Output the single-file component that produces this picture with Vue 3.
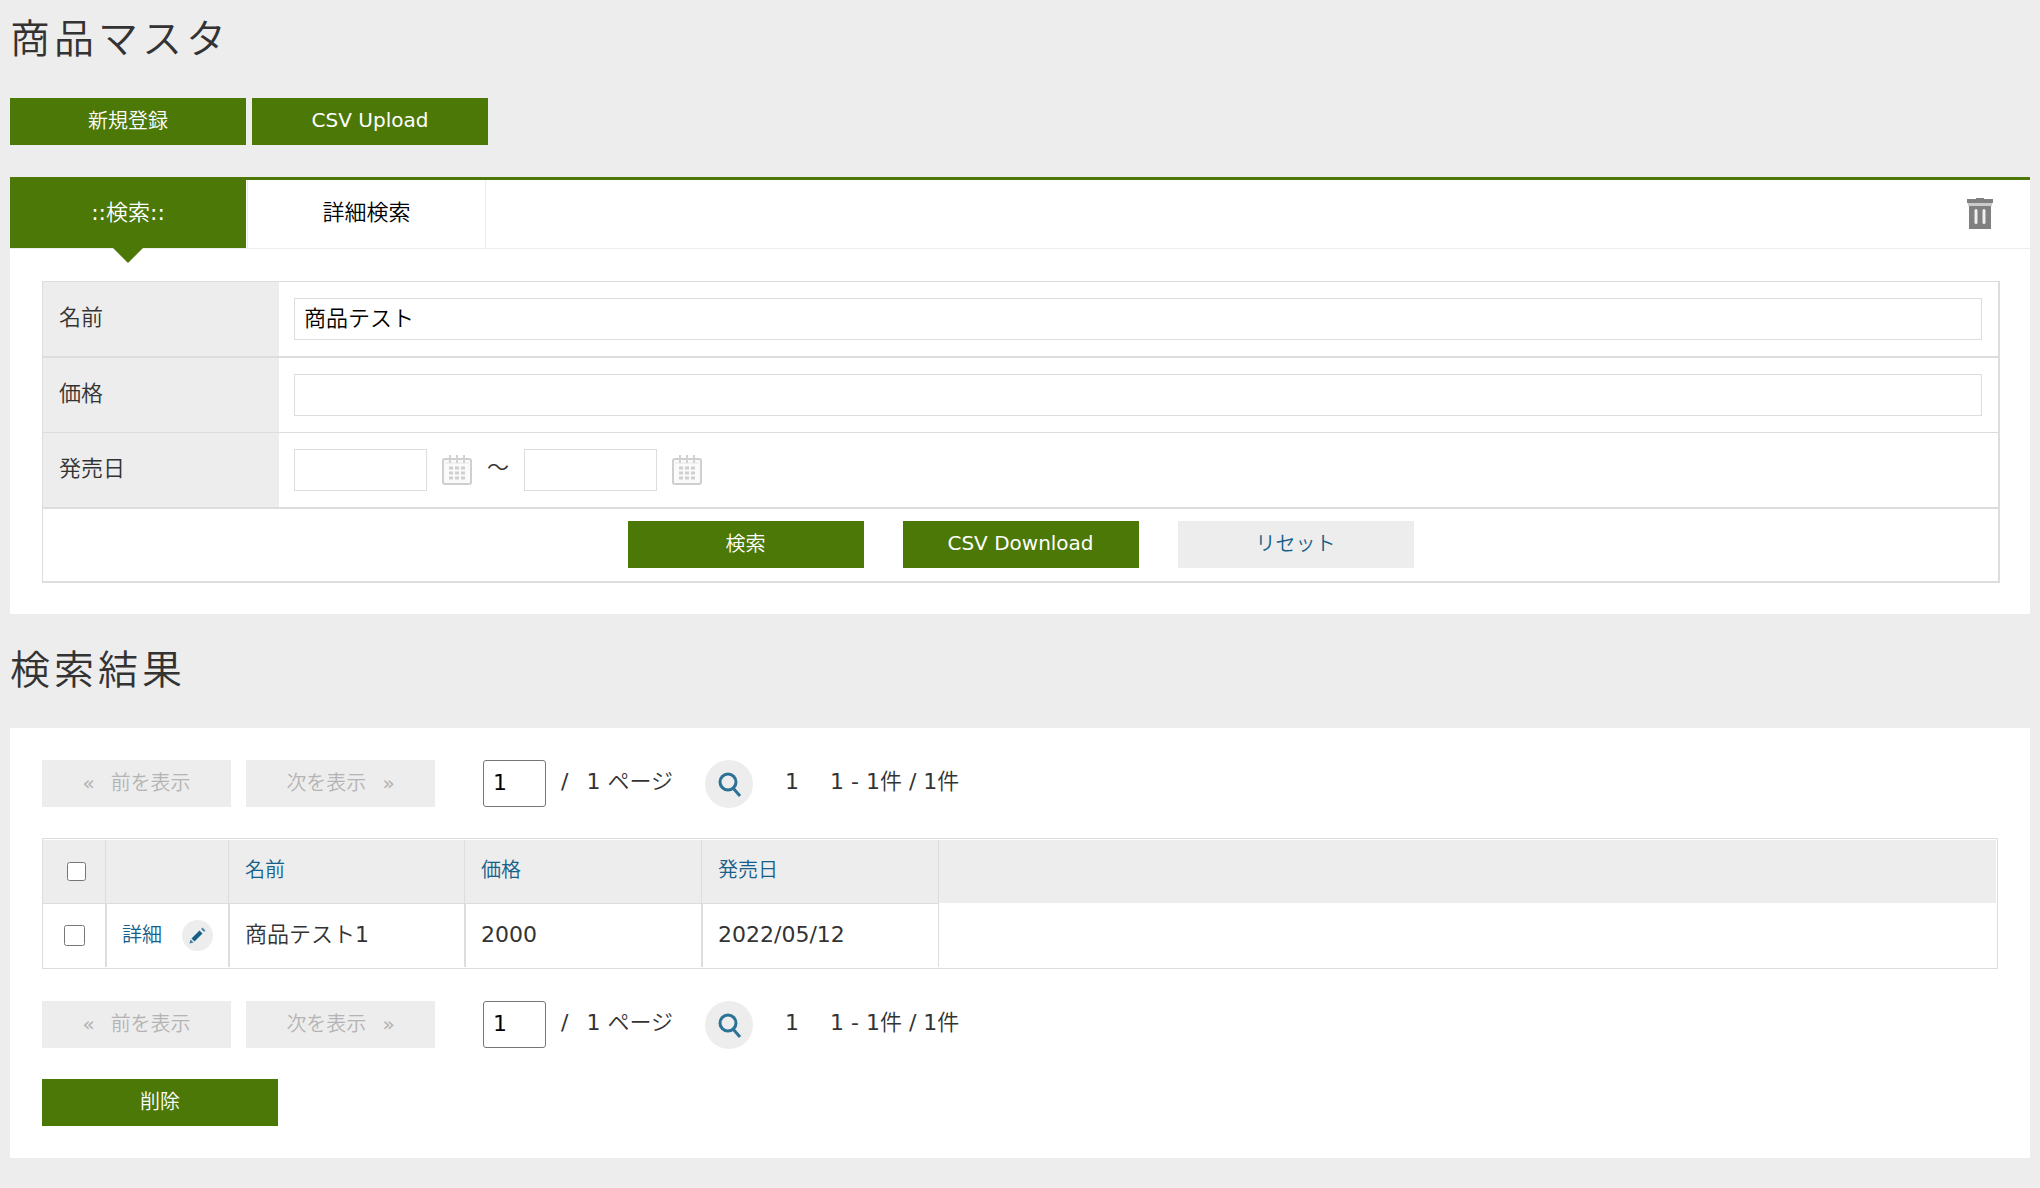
<script setup>
import { ref } from 'vue'

const name = ref('商品テスト')
const price = ref('')
const dateFrom = ref('')
const dateTo = ref('')
const page = ref('1')
const columns = ['名前', '価格', '発売日']
const rows = [{ id: 1, cells: ['商品テスト1', '2000', '2022/05/12'] }]
</script>

<template>
  <main class="page">
    <h1 class="title">商品マスタ</h1>
    <div class="actions">
      <button type="button" class="btn">新規登録</button>
      <button type="button" class="btn">CSV Upload</button>
    </div>

    <section class="panel search">
      <div class="tabs">
        <button type="button" class="tab active">::検索::</button>
        <button type="button" class="tab">詳細検索</button>
        <button type="button" class="trash" aria-label="クリア">
          <svg width="26" height="31" viewBox="0 0 26 31">
            <path fill="#808080" d="M9 0h8v1h9v4H0V1h9z" />
            <path fill="#ccc" d="M1 5h24v3H1z" />
            <path fill="#808080" d="M2 8h22v23H2z" />
            <path stroke="#eee" stroke-width="3" stroke-linecap="round" d="M9 12.500v12M17 12.500v12" />
          </svg>
        </button>
      </div>

      <form class="search-form" @submit.prevent>
        <div class="row thick">
          <label class="label" for="name">名前</label>
          <div class="field"><input id="name" v-model="name" class="box wide" type="text" /></div>
        </div>
        <div class="row">
          <label class="label" for="price">価格</label>
          <div class="field"><input id="price" v-model="price" class="box wide" type="text" /></div>
        </div>
        <div class="row thick">
          <label class="label" for="date-from">発売日</label>
          <div class="field">
            <input id="date-from" v-model="dateFrom" class="box date" type="text" />
            <svg class="calendar" width="30" height="30" viewBox="0 0 30 30">
              <rect x="1" y="4" width="28" height="25" rx="2" fill="#fafafa" stroke="#cfcfcf" stroke-width="2" />
              <path stroke="#f0f0f0" stroke-width="2" d="M3 8h24" />
              <path stroke="#d2d2d2" stroke-width="2" d="M8 0v8M15 0v8M22 0v8" />
              <path stroke="#cfcfcf" stroke-width="3" stroke-dasharray="4 2" d="M7 13h16M7 18h16M7 23h16" />
            </svg>
            <span class="tilde">～</span>
            <input id="date-to" v-model="dateTo" class="box date" type="text" aria-label="発売日" />
            <svg class="calendar" width="30" height="30" viewBox="0 0 30 30">
              <rect x="1" y="4" width="28" height="25" rx="2" fill="#fafafa" stroke="#cfcfcf" stroke-width="2" />
              <path stroke="#f0f0f0" stroke-width="2" d="M3 8h24" />
              <path stroke="#d2d2d2" stroke-width="2" d="M8 0v8M15 0v8M22 0v8" />
              <path stroke="#cfcfcf" stroke-width="3" stroke-dasharray="4 2" d="M7 13h16M7 18h16M7 23h16" />
            </svg>
          </div>
        </div>
        <div class="submit">
          <button type="submit" class="btn">検索</button>
          <button type="button" class="btn">CSV Download</button>
          <button type="reset" class="btn plain">リセット</button>
        </div>
      </form>
    </section>

    <h2 class="title results-title">検索結果</h2>

    <section class="panel results">
      <div class="pager">
        <button type="button" class="step" disabled><span class="before">«</span>前を表示</button>
        <button type="button" class="step" disabled>次を表示<span class="after">»</span></button>
        <input v-model="page" class="page-no" type="text" aria-label="ページ" />
        <span class="slash">/</span>
        <span class="total">1 ページ</span>
        <button type="button" class="go" aria-label="表示">
          <svg width="24" height="26" viewBox="0 0 24 26" fill="none" stroke="#2c7196" stroke-width="3">
            <circle cx="10" cy="10" r="8" />
            <path d="M15 16l7 8" />
          </svg>
        </button>
        <span class="current">1</span>
        <span>1 - 1件 / 1件</span>
      </div>

      <div class="grid">
        <table>
          <thead>
            <tr>
              <th class="check"><input type="checkbox" class="tick head-tick" aria-label="すべて選択" /></th>
              <th class="edit"></th>
              <th v-for="c in columns" :key="c" class="data"><a href="#">{{ c }}</a></th>
              <th class="rest"></th>
            </tr>
          </thead>
          <tbody>
            <tr v-for="r in rows" :key="r.id">
              <td class="check"><input type="checkbox" class="tick" aria-label="選択" /></td>
              <td class="edit">
                <div class="edit-links">
                  <a href="#">詳細</a>
                  <a href="#" class="pencil" aria-label="編集">
                    <svg width="17" height="17" viewBox="0 0 17 17" fill="#15608a">
                      <path d="M0.500 16.500l1-4 3 3z" opacity="0.800" />
                      <path d="M2.500 11.500L10.500 3.500 13.500 6.500 5.500 14.500z" />
                      <path d="M12 2L13.500 0.500 16.500 3.500 15 5z" opacity="0.700" />
                    </svg>
                  </a>
                </div>
              </td>
              <td v-for="cell in r.cells" :key="cell" class="data">{{ cell }}</td>
              <td class="rest"></td>
            </tr>
          </tbody>
        </table>
      </div>

      <div class="pager">
        <button type="button" class="step" disabled><span class="before">«</span>前を表示</button>
        <button type="button" class="step" disabled>次を表示<span class="after">»</span></button>
        <input v-model="page" class="page-no" type="text" aria-label="ページ" />
        <span class="slash">/</span>
        <span class="total">1 ページ</span>
        <button type="button" class="go" aria-label="表示">
          <svg width="24" height="26" viewBox="0 0 24 26" fill="none" stroke="#2c7196" stroke-width="3">
            <circle cx="10" cy="10" r="8" />
            <path d="M15 16l7 8" />
          </svg>
        </button>
        <span class="current">1</span>
        <span>1 - 1件 / 1件</span>
      </div>

      <button type="button" class="btn delete">削除</button>
    </section>
  </main>
</template>

<style>
html,
body {
  margin: 0;
  background: #ededed;
}
</style>

<style scoped>
* {
  box-sizing: border-box;
}
.page {
  padding: 0 10px 30px;
  color: #333;
  font-family: "DejaVu Sans", "Noto Sans CJK JP DemiLight", "Noto Sans CJK JP", sans-serif;
  font-size: 22px;
  line-height: 32px;
}
button,
input {
  margin: 0;
  font-family: inherit;
}
svg {
  display: block;
  flex: none;
}
a {
  color: #15608a;
  font-size: 20px;
  text-decoration: none;
}
.title,
.label,
.wide,
th a,
.edit-links a {
  font-family: "Noto Sans CJK JP", sans-serif;
  font-weight: 350;
}
.title {
  margin: 0;
  padding: 6px 0 32px;
  font-size: 40px;
  letter-spacing: 4px;
  line-height: 60px;
}
.results-title {
  padding: 23px 0 31px;
}
.actions {
  display: flex;
  gap: 6px;
  margin-bottom: 32px;
}
.btn {
  width: 236px;
  height: 47px;
  padding: 0 0 4px;
  border: 0;
  background: #4c7808;
  color: #fff;
  font-size: 20px;
}
.btn.plain {
  background: #ededed;
  color: #15608a;
}
.panel {
  background: #fff;
}
.search {
  padding-bottom: 31px;
  border-top: 3px solid #4c7808;
}
.tabs {
  display: flex;
  height: 69px;
  margin-bottom: 32px;
  border-bottom: 1px solid #ededed;
}
.tab {
  position: relative;
  width: 239px;
  padding: 0 0 8px;
  border: solid #ededed;
  border-width: 0 1px;
  background: #fff;
  color: #000;
  font-size: 22px;
}
.tab.active {
  width: 236px;
  margin-right: 1px;
  border: 0;
  background: #4c7808;
  color: #fff;
}
.tab.active::after {
  content: "";
  position: absolute;
  top: 100%;
  left: 50%;
  margin-left: -15px;
  border: 15px solid transparent;
  border-top-color: #4c7808;
  border-bottom: 0;
}
.trash {
  margin-left: auto;
  padding: 0 37px 2px;
  border: 0;
  background: none;
}
.search-form {
  margin: 0 30px 0 32px;
  border: 1px solid #ddd;
  border-width: 1px 2px 2px 1px;
}
.row {
  display: flex;
  border-bottom: 1px solid #ddd;
}
.row.thick {
  border-bottom-width: 2px;
}
.label {
  flex: none;
  width: 236px;
  padding: 17px 16px 25px;
  background: #ededed;
}
.field {
  display: flex;
  flex: 1;
  align-items: center;
  padding: 0 16px 0 15px;
}
.box {
  height: 42px;
  padding: 0 9px 6px;
  border: 1px solid #ddd;
  background: #fff;
  color: #000;
  font-size: 22px;
}
.wide {
  width: 100%;
}
.date {
  width: 133px;
}
.calendar {
  margin-left: 15px;
}
.tilde {
  margin: 0 15px;
  padding-bottom: 4px;
}
.submit {
  display: flex;
  justify-content: center;
  gap: 39px;
  padding: 12px 0 13px;
}
.results {
  padding: 32px;
}
.pager {
  display: flex;
  align-items: center;
  height: 47px;
  white-space: pre;
}
.pager > span {
  padding-bottom: 3px;
}
.step {
  width: 189px;
  height: 47px;
  margin-right: 15px;
  padding: 0 0 4px;
  border: 0;
  background: #ededed;
  color: #b4b4b4;
  font-size: 20px;
}
.before {
  margin-right: 16px;
}
.after {
  margin-left: 16px;
}
.page-no {
  width: 63px;
  height: 47px;
  margin-left: 33px;
  padding: 0 9px 3px;
  border: 1px solid #767676;
  border-radius: 3px;
  background: #fff;
  color: #000;
  font-size: 22px;
}
.slash {
  margin: 0 18px 0 15px;
}
.go {
  display: flex;
  align-items: center;
  justify-content: center;
  width: 48px;
  height: 48px;
  margin: 0 32px;
  padding: 2px 0 0 2px;
  border: 0;
  border-radius: 50%;
  background: #ededed;
}
.current {
  margin-right: 31px;
}
.grid {
  margin: 31px 0 32px;
  padding: 1px 1px 1px 0;
  border: 1px solid #ddd;
}
table {
  width: 100%;
  border-collapse: separate;
  border-spacing: 0;
  table-layout: fixed;
}
th,
td {
  height: 64px;
  padding: 0 16px 4px;
  border-right: 1px solid #ddd;
  text-align: left;
  font-weight: inherit;
}
th {
  border-bottom: 1px solid #ddd;
  background: #ededed;
}
td {
  height: 63px;
  padding-bottom: 2px;
}
td + td {
  border-left: 1px solid #ddd;
}
th.rest {
  border-bottom-color: #fff;
}
th.rest,
td.rest {
  border-right: 0;
  border-left: 0;
}
th.check,
td.check {
  width: 63px;
  padding: 0;
}
.edit {
  width: 123px;
}
.data {
  width: 237px;
}
.edit + .data {
  width: 236px;
}
td.edit {
  padding: 0 15px;
}
td.data {
  padding-left: 15px;
}
.edit-links {
  display: flex;
  align-items: center;
  justify-content: space-between;
}
.edit-links a:first-child {
  padding-bottom: 3px;
}
.pencil {
  display: flex;
  align-items: center;
  justify-content: center;
  width: 31px;
  height: 31px;
  border-radius: 50%;
  background: #ededed;
}
.tick {
  display: block;
  width: 21px;
  height: 21px;
  margin: 0 auto;
}
.head-tick {
  width: 19px;
  height: 19px;
  margin-left: 24px;
}
.delete {
  display: block;
  margin-top: 31px;
}
</style>
